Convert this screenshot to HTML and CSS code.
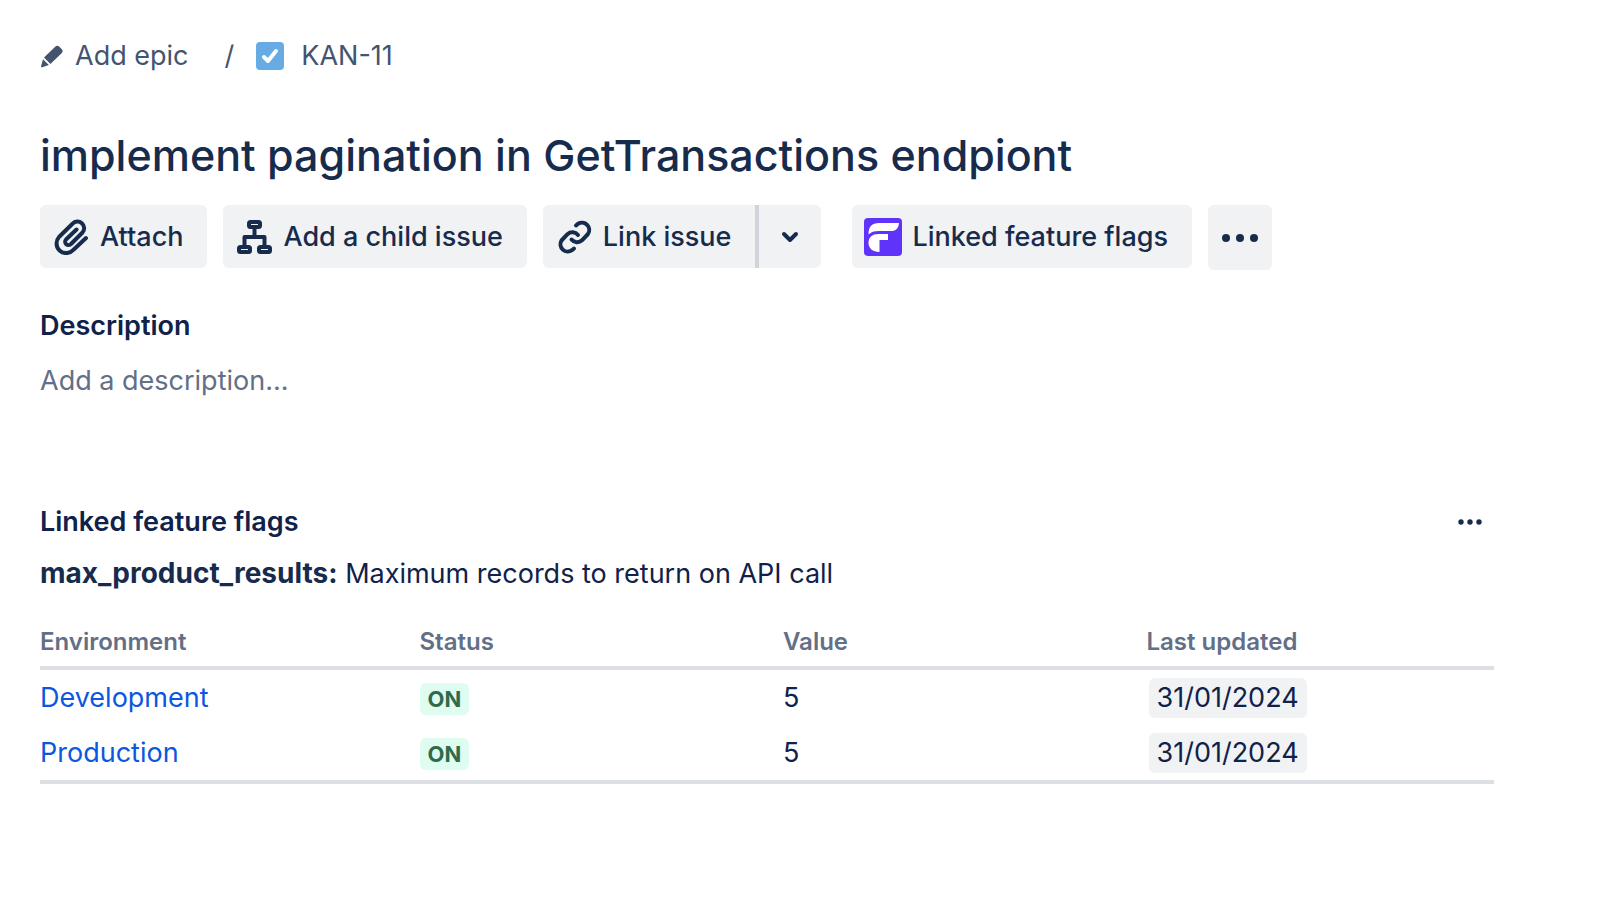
FILE: index.html
```html
<!doctype html>
<html lang="en">
  <head>
    <meta charset="UTF-8" />
    <meta name="viewport" content="width=device-width, initial-scale=1.0" />
    <title>KAN-11</title>
    <link rel="stylesheet" href="styles.css">
  </head>
  <body>
    <nav class="breadcrumbs" aria-label="Breadcrumbs">
      <a href="#" class="crumb add-epic">
        <svg width="24" height="24" viewBox="0 0 24 24" fill="currentColor" aria-hidden="true">
          <path d="M4 13.6L15.2 2.8a3 3 0 0 1 4.200 0l2.200 2.200a3 3 0 0 1 0 4.200L10.400 20z" />
          <path d="M3 15.2l5.900 5.900-6.600 2.100c-.9.300-1.500-.3-1.200-1.200z" />
        </svg>
        <span>Add epic</span>
      </a>
      <span class="separator">/</span>
      <a href="#" class="crumb issue-key">
        <svg width="28" height="28" viewBox="0 0 28 28" aria-hidden="true">
          <rect width="28" height="28" rx="4" fill="#67abe4" />
          <path d="M8 15l4 4 8-10" fill="none" stroke="#fff" stroke-width="4" stroke-linecap="round" stroke-linejoin="round" />
        </svg>
        <span>KAN-11</span>
      </a>
    </nav>

    <h1>implement pagination in GetTransactions endpiont</h1>

    <div class="toolbar">
      <button type="button" class="btn">
        <svg class="icon" width="36" height="36" viewBox="0 0 36 36" aria-hidden="true">
          <path d="M32 19L19.5 30.8A9.6 9.6 0 0 1 5 18L18.5 4.800A6.4 6.4 0 0 1 28.5 13.500L17 25A3.3 3.3 0 0 1 12 20.500L22.5 10.500" />
        </svg>
        Attach
      </button>
      <button type="button" class="btn">
        <svg class="icon" width="36" height="36" viewBox="0 0 36 36" aria-hidden="true">
          <rect x="12" y="3" width="11" height="5" rx="1.5" />
          <rect x="2" y="28" width="11" height="5" rx="1.5" />
          <rect x="22" y="28" width="11" height="5" rx="1.5" />
          <path d="M17.5 8v10M7.5 28v-10h20v10" />
        </svg>
        Add a child issue
      </button>
      <div class="split">
        <button type="button" class="btn">
          <svg class="icon" width="36" height="36" viewBox="0 0 36 36" aria-hidden="true">
            <path d="M19 6.5l2-1.700A7.3 7.3 0 0 1 31 15L25 21.300A7.3 7.3 0 0 1 14.500 20.500" />
            <path d="M17 29.5l-2 1.700A7.3 7.3 0 0 1 4.500 21.500L10.500 15.200A7.3 7.3 0 0 1 21 16" />
          </svg>
          Link issue
        </button>
        <button type="button" class="btn chevron" aria-label="More link options">
          <svg width="18" height="12" viewBox="0 0 18 12" aria-hidden="true">
            <path d="M3 3l6 6 6-6" />
          </svg>
        </button>
      </div>
      <button type="button" class="btn flags">
        <svg width="38" height="38" viewBox="0 0 38 38" aria-hidden="true">
          <rect width="38" height="38" rx="4" fill="#5f33fa" />
          <path d="M4.5 16.500C4.5 8.500 8 5 15 5h20c-.5 5.500-3 8-8 8H15c-5 0-8 1-10.500 3.500z" fill="#fff" />
          <path d="M4.5 25c0-6 4-9 10-9H24v6h-8.500v12C8.500 34 4.500 30 4.500 25z" fill="#fff" />
        </svg>
        Linked feature flags
      </button>
      <button type="button" class="btn more" aria-label="More actions">
        <svg width="36" height="8" viewBox="0 0 36 8" fill="currentColor" aria-hidden="true">
          <circle cx="4" cy="4" r="4" /><circle cx="18" cy="4" r="4" /><circle cx="32" cy="4" r="4" />
        </svg>
      </button>
    </div>

    <section class="description">
      <h2>Description</h2>
      <p class="placeholder">Add a description...</p>
    </section>

    <section>
      <div class="section-head">
        <h2>Linked feature flags</h2>
        <button type="button" class="panel-menu" aria-label="Feature flag options">
          <svg width="24" height="6" viewBox="0 0 24 6" fill="currentColor" aria-hidden="true">
            <circle cx="3" cy="3" r="2.7" /><circle cx="12" cy="3" r="2.7" /><circle cx="21" cy="3" r="2.7" />
          </svg>
        </button>
      </div>
      <p class="flag"><strong>max_product_results:</strong> Maximum records to return on API call</p>

      <table>
        <thead>
          <tr>
            <th>Environment</th>
            <th>Status</th>
            <th>Value</th>
            <th>Last updated</th>
          </tr>
        </thead>
        <tbody>
          <tr>
            <td><a href="#">Development</a></td>
            <td><span class="status">ON</span></td>
            <td>5</td>
            <td><time class="date" datetime="2024-01-31">31/01/2024</time></td>
          </tr>
          <tr>
            <td><a href="#">Production</a></td>
            <td><span class="status">ON</span></td>
            <td>5</td>
            <td><time class="date" datetime="2024-01-31">31/01/2024</time></td>
          </tr>
        </tbody>
      </table>
    </section>
  </body>
</html>
```
FILE: styles.css
```css
* {
  box-sizing: border-box;
}
body {
  margin: 0;
  padding: 36px 106px 36px 40px;
  background: #fff;
  color: #10214a;
  font-family: Inter, sans-serif;
  font-size: 27px;
  line-height: 40px;
}
h1,
h2,
p {
  margin: 0;
}
a {
  text-decoration: none;
}
svg {
  display: block;
  flex: none;
}
.breadcrumbs {
  display: flex;
  align-items: center;
  color: #44546f;
}
.crumb {
  display: flex;
  align-items: center;
  color: inherit;
}
.add-epic {
  gap: 11px;
}
.separator {
  margin: 0 22px 0 36px;
}
.issue-key {
  gap: 17px;
}
h1 {
  margin-top: 47px;
  color: #172b4d;
  font-size: 43px;
  font-weight: 500;
  line-height: 64px;
}
.toolbar {
  display: flex;
  align-items: flex-start;
  gap: 16px;
  margin-top: 18px;
}
.btn {
  display: flex;
  align-items: center;
  gap: 10px;
  height: 63px;
  padding: 0 24px 0 14px;
  border: 0;
  border-radius: 6px;
  background: #f1f2f4;
  color: #172b4d;
  font: inherit;
  font-weight: 500;
  white-space: nowrap;
}
.icon {
  fill: none;
  stroke: currentColor;
  stroke-width: 4;
  stroke-linecap: round;
  stroke-linejoin: round;
}
.split {
  display: flex;
}
.split .btn:first-child {
  border-radius: 6px 0 0 6px;
}
.btn.chevron {
  padding: 0 22px;
  border-left: 4px solid #d0d3dc;
  border-radius: 0 6px 6px 0;
}
.chevron path {
  fill: none;
  stroke: currentColor;
  stroke-width: 4;
  stroke-linecap: round;
  stroke-linejoin: round;
}
.btn.flags {
  margin-left: 15px;
  padding-left: 12px;
}
.btn.more {
  height: 65px;
  padding: 0 14px;
}
.description {
  margin: 36px 0 101px;
}
h2 {
  font-size: 27px;
  font-weight: 600;
  line-height: 40px;
}
.placeholder {
  margin-top: 15px;
  color: #626f86;
}
.section-head {
  display: flex;
  align-items: center;
  justify-content: space-between;
}
.panel-menu {
  padding: 12px;
  border: 0;
  background: none;
  color: #172b4d;
}
.flag {
  margin-top: 11px;
}
.flag strong {
  color: #172b4d;
  font-size: 28px;
}
table {
  width: 100%;
  margin-top: 32px;
  border-collapse: collapse;
  table-layout: fixed;
  border-bottom: 4px solid #dcdfe4;
}
thead {
  border-bottom: 4px solid #dcdfe4;
}
th,
td {
  padding: 0 16px;
  text-align: left;
}
th:first-child,
td:first-child {
  padding-left: 0;
}
th {
  height: 42px;
  padding-bottom: 8px;
  color: #626f86;
  font-size: 24px;
  font-weight: 600;
  line-height: 30px;
}
td {
  height: 57px;
}
td a {
  color: #0c56e0;
}
.status {
  display: inline-block;
  padding: 0 8px;
  border-radius: 6px;
  background: #dffcf0;
  color: #2f6b4b;
  font-size: 22px;
  font-weight: 700;
  line-height: 32px;
}
.date {
  display: inline-block;
  margin-left: 2px;
  padding: 0 8px;
  border-radius: 6px;
  background: #f1f2f4;
}
```
